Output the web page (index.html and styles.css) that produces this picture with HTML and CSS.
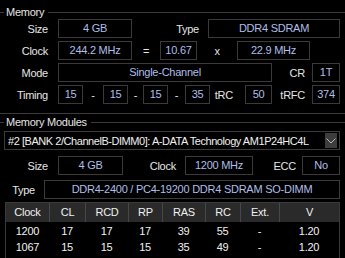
FILE: index.html
```html
<!DOCTYPE html>
<html lang="en">
<head>
    <meta charset="UTF-8">
    <title>Memory</title>
    <link rel="stylesheet" href="styles.css">
</head>
<body>

    <div class="group">
        <div class="legend"><span>Memory</span></div>

        <div class="row">
            <span class="lbl">Size</span>
            <span class="box w74">4 GB</span>
            <span class="tag w67">Type</span>
            <span class="box w132 ml9">DDR4 SDRAM</span>
        </div>

        <div class="row">
            <span class="lbl">Clock</span>
            <span class="box w74">244.2 MHz</span>
            <span class="sym w28">=</span>
            <span class="box w37">10.67</span>
            <span class="sym w40">x</span>
            <span class="box w73">22.9 MHz</span>
        </div>

        <div class="row">
            <span class="lbl">Mode</span>
            <span class="box w214">Single-Channel</span>
            <span class="tag w33">CR</span>
            <span class="box w28 ml7">1T</span>
        </div>

        <div class="row">
            <span class="lbl">Timing</span>
            <span class="box w25">15</span>
            <span class="sym w20">-</span>
            <span class="box w25">15</span>
            <span class="sym w15">-</span>
            <span class="box w25">15</span>
            <span class="sym w17">-</span>
            <span class="box w25">35</span>
            <span class="tag w23">tRC</span>
            <span class="box w27 ml12">50</span>
            <span class="tag w33">tRFC</span>
            <span class="box w28 ml7">374</span>
        </div>
    </div>

    <div class="group modules">
        <div class="legend"><span>Memory Modules</span></div>

        <div class="combo">
            <span class="combo-text">#2 [BANK 2/ChannelB-DIMM0]: A-DATA Technology AM1P24HC4L</span>
            <span class="combo-btn">
                <svg width="12" height="15" viewBox="0 0 12 15">
                    <path d="M1.5 5.5 L6 10 L10.5 5.5" fill="none" stroke="#b8b8b8" stroke-width="1"/>
                </svg>
            </span>
        </div>

        <div class="row">
            <span class="lbl">Size</span>
            <span class="box w65">4 GB</span>
            <span class="tag w53">Clock</span>
            <span class="box w68 ml9">1200 MHz</span>
            <span class="tag w43">ECC</span>
            <span class="box w38 ml6">No</span>
        </div>

        <div class="row">
            <span class="lbl short">Type</span>
            <span class="box w296">DDR4-2400 / PC4-19200 DDR4 SDRAM SO-DIMM</span>
        </div>

        <div class="table">
            <div class="tr thead">
                <span>Clock</span><span>CL</span><span>RCD</span><span>RP</span>
                <span>RAS</span><span>RC</span><span>Ext.</span><span>V</span>
            </div>
            <div class="tbody">
                <div class="tr">
                    <span>1200</span><span>17</span><span>17</span><span>17</span>
                    <span>39</span><span>55</span><span>-</span><span>1.20</span>
                </div>
                <div class="tr">
                    <span>1067</span><span>15</span><span>15</span><span>15</span>
                    <span>35</span><span>49</span><span>-</span><span>1.20</span>
                </div>
            </div>
        </div>
    </div>

</body>
</html>
```

FILE: styles.css
```css
html,body{margin: 0; padding: 0; background: #000; overflow: hidden;}
body{
    width: 345px;
    height: 258px;
    font-family: "Liberation Sans", Arial, sans-serif;
    font-size: 11px;
    letter-spacing: -0.25px;
    color: #e6e6e6;
}

/* group box with a legend on the top line */
.group{border-bottom: 1px solid #3a3a3a; padding-bottom: 9px;}
.modules{border-bottom: 0; padding-bottom: 0;}
.legend{
    display: flex;
    align-items: center;
    height: 13px;
    margin-top: 6px;
    line-height: 13px;
}
.legend::before{content: ""; width: 4px; height: 1px; background: #3a3a3a; margin-right: 2px;}
.legend::after{content: ""; flex: 1; height: 1px; background: #3a3a3a; margin-left: 4px;}
.modules .legend{margin-top: 2px;}

.row{display: flex; align-items: center; height: 19px; margin-top: 3px;}
.group .legend + .row{margin-top: 0;}
.modules .row{margin-top: 5px;}
.modules .combo + .row{margin-top: 6px;}

.lbl{width: 48px; margin-right: 10px; text-align: right;}
.lbl.short{width: 35px; margin-right: 9px;}
.tag{text-align: right;}
.sym{text-align: center;}

.box{
    box-sizing: border-box;
    height: 19px;
    line-height: 17px;
    border: 1px solid #3a3a3a;
    text-align: center;
    color: #aebfe9;
    white-space: nowrap;
}

.w15{width: 15px;} .w17{width: 17px;} .w20{width: 20px;} .w23{width: 23px;}
.w25{width: 25px;} .w27{width: 27px;} .w28{width: 28px;} .w33{width: 33px;}
.w37{width: 37px;} .w38{width: 38px;} .w40{width: 40px;} .w43{width: 43px;}
.w53{width: 53px;} .w65{width: 65px;} .w67{width: 67px;} .w68{width: 68px;}
.w73{width: 73px;} .w74{width: 74px;} .w132{width: 132px;} .w214{width: 214px;}
.w296{width: 296px;}
.ml6{margin-left: 6px;} .ml7{margin-left: 7px;} .ml9{margin-left: 9px;} .ml12{margin-left: 12px;}

/* module selector */
.combo{
    display: flex;
    align-items: center;
    box-sizing: border-box;
    width: 336px;
    height: 19px;
    margin: 2px 0 0 4px;
    border: 1px solid #3a3a3a;
    color: #f0f0f0;
}
.combo-text{flex: 1; padding-left: 3px; white-space: nowrap; overflow: hidden; letter-spacing: -0.45px;}
.combo-btn{display: block; width: 12px; height: 15px; margin-right: 2px; background: #3d3d3d;}
.combo-btn svg{display: block;}

/* timings table */
.table{
    width: 335px;
    box-sizing: border-box;
    height: 60px;
    margin: 3px 0 0 5px;
    border: 1px solid #3a3a3a;
    color: #f0f0f0;
}
.tr{display: grid; grid-template-columns: 43px 36px 43px 34px 43px 35px 39px 60px;}
.tr span{text-align: center;}
.thead{height: 19px; line-height: 19px; background: #2a2a2a;}
.thead span + span{border-left: 1px solid #484848;}
.tbody{padding-top: 1px;}
.tbody .tr{height: 16px; line-height: 16px;}
```
